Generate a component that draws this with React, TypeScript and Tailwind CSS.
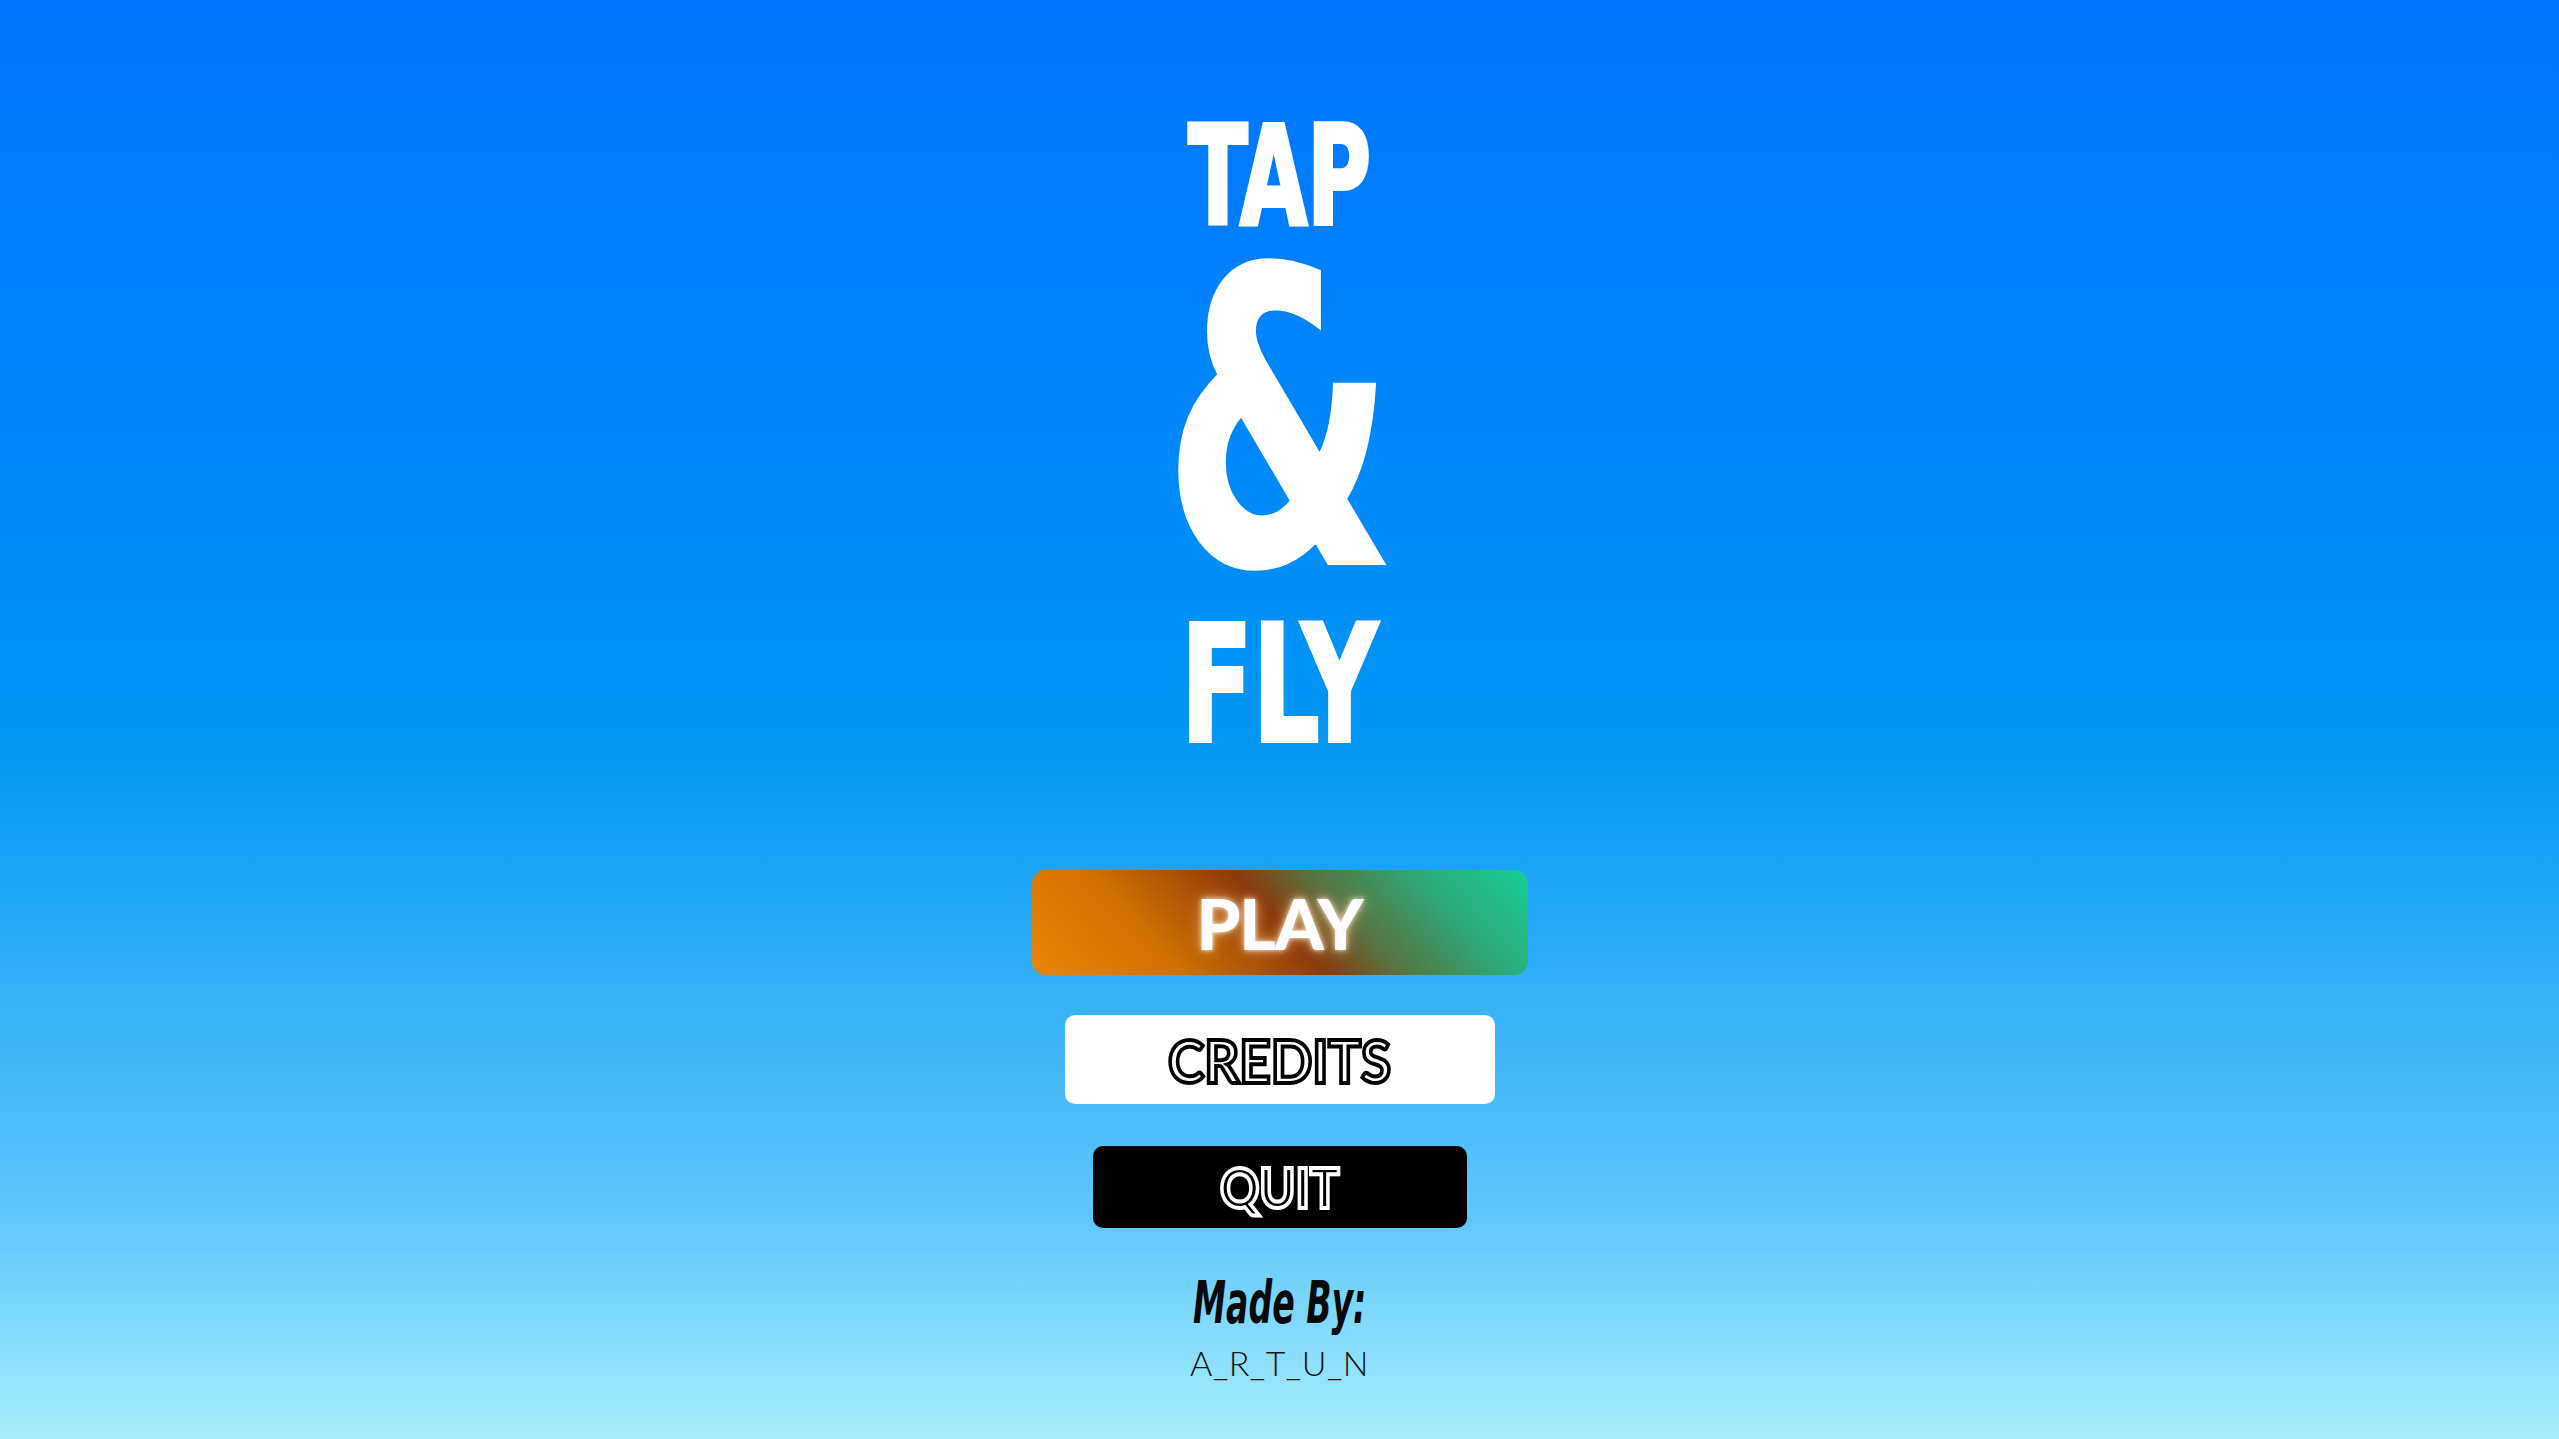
import React from 'react';

const titleFont = "font-['DejaVu_Sans_Condensed','DejaVu_Sans',sans-serif]";
const uiFont = "font-['Lato','Noto_Sans',sans-serif]";

const MenuScreen: React.FC = () => {
  return (
    <div className="h-screen w-full overflow-hidden flex flex-col items-center bg-[linear-gradient(to_bottom,#0074ff_0%,#0087f9_30%,#0095f3_50%,#1fa6f6_62%,#3db4f8_72%,#5cc6fa_84%,#86dcfc_93%,#a8edfb_100%)]">
      {/* title */}
      <div className={`pt-[108px] flex flex-col items-center text-white font-bold [-webkit-text-stroke:4px_white] ${titleFont}`}>
        <div className="text-[138px] leading-none scale-x-[0.7]">TAP</div>
        <div className="text-[408px] leading-[352px] scale-x-[0.72]">&amp;</div>
        <div className="text-[163px] leading-[173px] scale-x-[0.715]">FLY</div>
      </div>

      {/* buttons */}
      <button className="mt-[99px] w-[496px] h-[105px] rounded-[14px] flex items-center justify-center bg-[linear-gradient(48deg,#e88505_0%,#d07002_26%,#8c3a0c_50%,#5a7040_62%,#2fa878_80%,#14cd97_100%)]">
        <span className={`text-[70px] leading-none font-black text-white tracking-[-1px] [text-shadow:0_0_5px_rgba(255,240,220,0.95),0_0_14px_rgba(255,210,160,0.7)] ${uiFont}`}>
          PLAY
        </span>
      </button>

      <button className="mt-[40px] w-[430px] h-[89px] rounded-[10px] bg-white flex items-center justify-center">
        <span className={`text-[60px] leading-none font-bold text-white scale-x-[0.91] [-webkit-text-stroke:4px_black] ${uiFont}`}>
          CREDITS
        </span>
      </button>

      <button className="mt-[42px] w-[374px] h-[82px] rounded-[10px] bg-black flex items-center justify-center">
        <span className={`text-[56px] leading-none font-bold text-black scale-x-[0.87] [-webkit-text-stroke:4px_white] ${uiFont}`}>
          QUIT
        </span>
      </button>

      {/* credits */}
      <div className={`mt-[45px] text-[59px] leading-none font-bold italic text-[#0a0a0a] scale-x-[0.625] ${titleFont}`}>
        Made By:
      </div>
      <div className={`mt-[14px] text-[34px] leading-none font-light tracking-[0.5px] text-[#111] ${uiFont}`}>
        A_R_T_U_N
      </div>
    </div>
  );
};

export default function App() {
  return <MenuScreen />;
}
